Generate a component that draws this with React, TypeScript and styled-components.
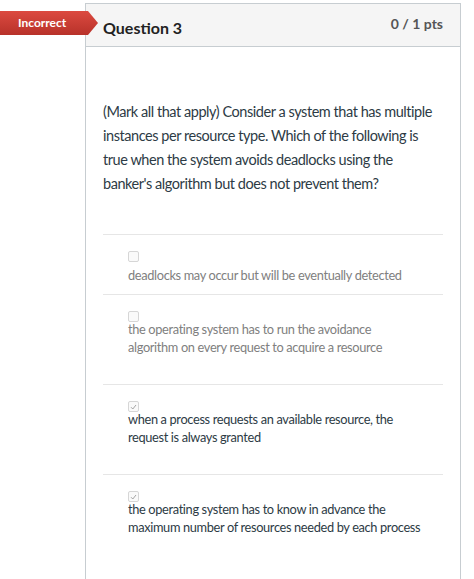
import styled, { createGlobalStyle } from "styled-components";

const Global = createGlobalStyle`
  html, body {
    margin: 0;
    padding: 0;
    background: #ffffff;
    font-family: Lato, "Open Sans", "Liberation Sans", sans-serif;
  }
`

const Page = styled.div`
  position: relative;
  width: 474px;
  height: 579px;
  overflow: hidden;
  padding-top: 3px;
  box-sizing: border-box;
`
const Badge = styled.div`
  position: absolute;
  left: 0;
  top: 11px;
  width: 98px;
  height: 24px;
  background: linear-gradient(to bottom, #dc4a40, #b8322a);
  clip-path: polygon(0 0, 88px 0, 98px 12px, 88px 24px, 0 24px);
  color: #ffffff;
  font-size: 12px;
  font-weight: 700;
  line-height: 24px;
  padding-left: 18px;
  box-sizing: border-box;
`
const Card = styled.div`
  margin-left: 85px;
  width: 376px;
  height: 600px;
  border: 1px solid #c7cdd1;
  border-bottom: none;
  box-sizing: border-box;
`
const Header = styled.div`
  height: 43px;
  background: #f5f5f5;
  border-bottom: 1px solid #c7cdd1;
  display: flex;
  justify-content: space-between;
  align-items: flex-start;
  padding: 0 17px;
  box-sizing: border-box;
`
const Title = styled.div`
  font-size: 16px;
  font-weight: 700;
  color: #222;
  padding-top: 14px;
`
const Points = styled.div`
  font-size: 14px;
  font-weight: 700;
  color: #555;
  padding-top: 11px;
`
const Body = styled.div`
  padding: 53px 17px 0 17px;
`
const QuestionText = styled.p`
  margin: 0 0 38px 0;
  font-size: 14.5px;
  letter-spacing: -0.45px;
  line-height: 24px;
  color: #2d3b45;
`
const Answer = styled.div<{ $single?: boolean }>`
  border-top: 1px solid #e6e6e6;
  padding: 16px 0 ${p => (p.$single ? "10px" : "28px")} 25px;
`
const Box = styled.div`
  width: 9px;
  height: 9px;
  border: 1px solid #d6d6d6;
  border-radius: 2px;
  display: flex;
  align-items: center;
  justify-content: center;
  background: #fafafa;
`
const AnswerText = styled.div<{ $selected?: boolean; $single?: boolean }>`
  margin-top: ${p => (p.$single ? "4px" : "-2px")};
  font-size: 12.8px;
  letter-spacing: -0.35px;
  line-height: 18px;
  color: ${p => (p.$selected ? "#2d3b45" : "#808080")};
`

const answers = [
  { text: "deadlocks may occur but will be eventually detected", selected: false, single: true },
  { text: "the operating system has to run the avoidance\nalgorithm on every request to acquire a resource", selected: false },
  { text: "when a process requests an available resource, the\nrequest is always granted", selected: true },
  { text: "the operating system has to know in advance the\nmaximum number of resources needed by each process", selected: true },
]

const Check = () => (
  <svg width="7" height="6" viewBox="0 0 7 6">
    <path d="M1 3.2 L2.8 5 L6 1" fill="none" stroke="#9a9a9a" strokeWidth="0.9" />
  </svg>
)

export default function App() {
  return (
    <Page>
      <Global />
      <Badge>Incorrect</Badge>
      <Card>
        <Header>
          <Title>Question 3</Title>
          <Points>0 / 1 pts</Points>
        </Header>
        <Body>
          <QuestionText>
            (Mark all that apply) Consider a system that has multiple instances per resource type. Which of the following is true when the system avoids deadlocks using the banker's algorithm but does not prevent them?
          </QuestionText>
          {answers.map((a, i) => (
            <Answer key={i} $single={a.single}>
              <Box>{a.selected && <Check />}</Box>
              <AnswerText $selected={a.selected} $single={a.single}>
                {a.text.split("\n").map((l, j) => (
                  <div key={j}>{l}</div>
                ))}
              </AnswerText>
            </Answer>
          ))}
        </Body>
      </Card>
    </Page>
  )
}
